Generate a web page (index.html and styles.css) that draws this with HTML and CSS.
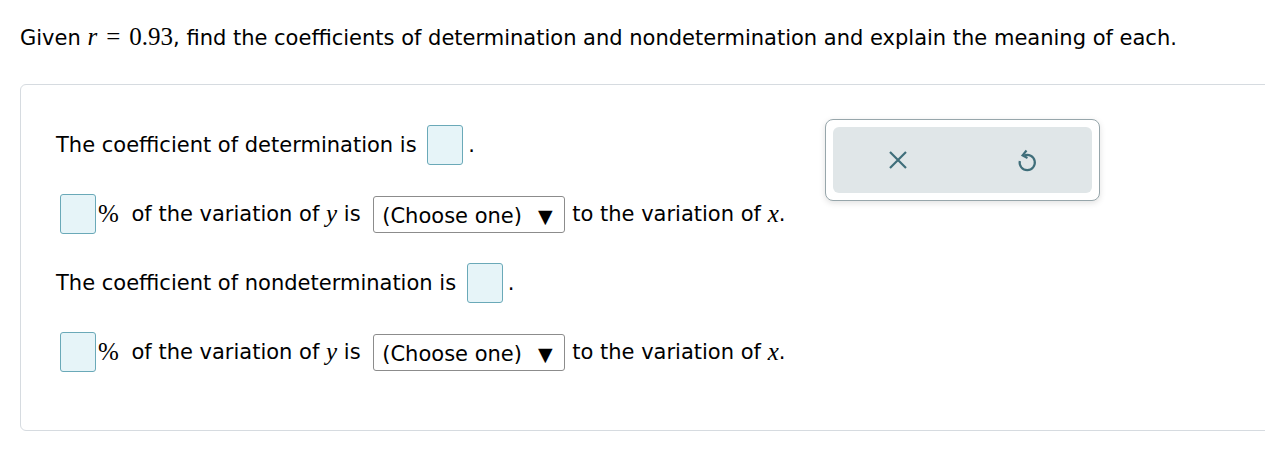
FILE: index.html
```html
<!DOCTYPE html>
<html>
<head>
<meta charset="utf-8">
<link rel="stylesheet" href="styles.css">
</head>
<body>
<div class="page">
  <p class="question">Given <span class="math"><i>r</i><span class="op">=</span>0.93</span>, find the coefficients of determination and nondetermination and explain the meaning of each.</p>
  <div class="card">
    <div class="row">The coefficient of determination is <span class="box"></span>.</div>
    <div class="row"><span class="box first"></span><span class="math pct">%</span> of the variation of <span class="math"><i>y</i></span> is <span class="select">(Choose one)<span class="arrow">▼</span></span>to the variation of <span class="math"><i>x</i></span>.</div>
    <div class="row">The coefficient of nondetermination is <span class="box"></span>.</div>
    <div class="row"><span class="box first"></span><span class="math pct">%</span> of the variation of <span class="math"><i>y</i></span> is <span class="select">(Choose one)<span class="arrow">▼</span></span>to the variation of <span class="math"><i>x</i></span>.</div>
    <div class="tools">
      <div class="tools-inner">
        <span class="cell"><svg class="icon" width="20" height="20" viewBox="0 0 20 20"><path d="M2 2 L18 18 M18 2 L2 18" stroke="#3f6e7a" stroke-width="2.2" fill="none"/></svg></span>
        <span class="cell"><svg class="icon" width="22" height="26" viewBox="0 0 22 26"><path d="M8.2 8.6 A7.6 7.6 0 1 1 3.8 14" stroke="#3f6e7a" stroke-width="2.2" fill="none"/><path d="M10.5 3.5 L6.6 8.4 L11.5 11" stroke="#3f6e7a" stroke-width="2.2" fill="none"/></svg></span>
      </div>
    </div>
  </div>
</div>
</body>
</html>
```
FILE: styles.css
```css
html, body {
  margin: 0;
  padding: 0;
  background: #ffffff;
  overflow: hidden;
}
.page {
  width: 1265px;
  height: 453px;
  font-family: "DejaVu Sans", Verdana, sans-serif;
  font-size: 21px;
  color: #000;
}
.question {
  margin: 0;
  padding: 24px 0 0 20px;
  line-height: 26px;
  font-size: 21px;
}
.math {
  font-family: "Liberation Serif", "DejaVu Serif", serif;
  font-size: 25px;
}
.op {
  margin: 0 9px;
}
.card {
  position: relative;
  margin: 33px 0 0 20px;
  width: 1270px;
  height: 347px;
  box-sizing: border-box;
  border: 1px solid #d6dbe0;
  border-radius: 6px;
  padding: 38px 0 0 35px;
}
.row {
  display: flex;
  align-items: center;
  height: 44px;
  margin-bottom: 25px;
  white-space: pre;
}
.box {
  display: inline-block;
  width: 34px;
  height: 38px;
  border: 1.5px solid #6aa9b8;
  border-radius: 3px;
  background: #e6f4f8;
  margin: 0 5px 0 4px;
}
.box.first {
  margin: 0 2px 0 4px;
}
.pct {
  margin-right: 6px;
}
.select {
  display: inline-flex;
  align-items: center;
  height: 37px;
  box-sizing: border-box;
  width: 192px;
  border: 1px solid #8c8c8c;
  border-radius: 3px;
  padding: 4px 0 0 8px;
  margin: 0 7px 0 6px;
}
.arrow {
  font-size: 19px;
  margin-left: 16px;
}
.tools {
  position: absolute;
  left: 804px;
  top: 34px;
  width: 275px;
  height: 82px;
  box-sizing: border-box;
  border: 1px solid #97a6ab;
  border-radius: 8px;
  background: #fff;
  padding: 7px;
  box-shadow: 0 2px 6px rgba(0,0,0,0.12);
}
.tools-inner {
  height: 100%;
  border-radius: 6px;
  background: #e0e6e8;
  display: grid;
  grid-template-columns: 1fr 1fr;
  align-items: center;
  justify-items: center;
}
.cell {
  display: flex;
  align-items: center;
  justify-content: center;
}
.icon {
  display: block;
}
```
